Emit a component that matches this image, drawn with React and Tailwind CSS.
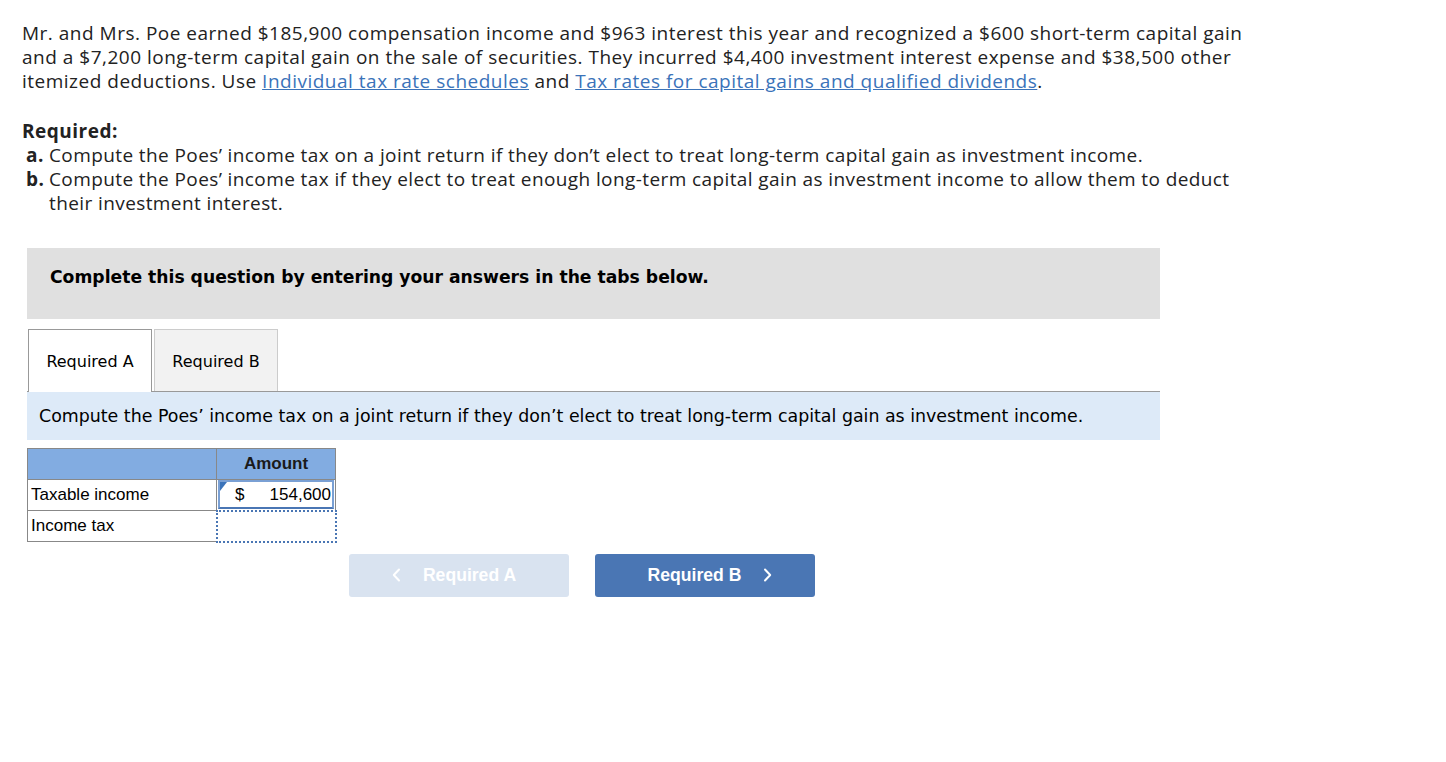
function Chevron({ dir }) {
  return (
    <svg width="9" height="14" viewBox="0 0 9 14" fill="none" stroke="currentColor" strokeWidth="2" strokeLinecap="round" strokeLinejoin="round">
      {dir === 'left' ? <path d="M7 1.5 1.8 7 7 12.5" /> : <path d="M2 1.5 7.2 7 2 12.5" />}
    </svg>
  );
}

export default function App() {
  return (
    <div className="min-h-screen bg-white text-[#222]">
      <div className="pl-[22px] pt-[21px] w-[1266px] font-['Open_Sans',sans-serif] text-[19px] leading-[24px] tracking-[0.5px]">
        <p>
          Mr. and Mrs. Poe earned $185,900 compensation income and $963 interest this year and recognized a $600 short-term capital gain and a $7,200 long-term capital gain on the sale of securities. They incurred $4,400 investment interest expense and $38,500 other itemized deductions. Use{' '}
          <a href="#" className="text-[#3b73b9] underline">Individual tax rate schedules</a> and{' '}
          <a href="#" className="text-[#3b73b9] underline">Tax rates for capital gains and qualified dividends</a>.
        </p>

        <div className="mt-[26px]">
          <p className="font-bold">Required:</p>
          <div className="flex pl-[4px]">
            <span className="font-bold w-[23px] shrink-0">a.</span>
            <span className="tracking-[0.4px]">Compute the Poes’ income tax on a joint return if they don’t elect to treat long-term capital gain as investment income.</span>
          </div>
          <div className="flex pl-[4px]">
            <span className="font-bold w-[23px] shrink-0">b.</span>
            <span className="tracking-[0.4px]">Compute the Poes’ income tax if they elect to treat enough long-term capital gain as investment income to allow them to deduct their investment interest.</span>
          </div>
        </div>
      </div>

      <div className="ml-[27px] w-[1133px] font-['DejaVu_Sans',sans-serif]">
        <div className="mt-[33px] h-[71px] bg-[#e0e0e0] flex items-start pt-[17px] pl-[23px] text-[17.2px] font-bold text-black">
          Complete this question by entering your answers in the tabs below.
        </div>

        <div className="mt-[10px] flex items-end border-b border-[#999]">
          <div className="ml-[1px] w-[124px] h-[63px] -mb-px bg-white border border-b-0 border-[#999] flex items-center justify-center pt-[2px] text-[16px] text-black">
            Required A
          </div>
          <div className="ml-[2px] w-[124px] h-[62px] bg-[#f2f2f2] border border-b-0 border-[#ccc] flex items-center justify-center pt-[2px] text-[16px] text-black">
            Required B
          </div>
        </div>

        <div className="h-[48px] bg-[#ddeaf8] flex items-center pl-[12px] text-[17.4px] text-black">
          Compute the Poes’ income tax on a joint return if they don’t elect to treat long-term capital gain as investment income.
        </div>

        <table className="mt-[8px] border-collapse font-['Liberation_Sans',sans-serif] text-[17px] text-black">
          <thead>
            <tr className="h-[31px] bg-[#82ace1]">
              <th className="w-[189px] border border-[#888]"></th>
              <th className="w-[119px] border border-[#888] font-bold text-[#1a1a1a]">Amount</th>
            </tr>
          </thead>
          <tbody>
            <tr className="h-[31px]">
              <td className="border border-[#888] pl-[3px]">Taxable income</td>
              <td className="border border-[#888] p-0">
                <div className="relative h-[29px] mx-[1px] border-2 border-[#7aa0d4] border-b-[#4a76b4] border-b-dotted flex items-center justify-between pl-[15px] pr-[1px]">
                  <span className="absolute left-0 top-0 w-0 h-0 border-t-[9px] border-t-[#3b73b9] border-r-[7px] border-r-transparent"></span>
                  <span>$</span>
                  <span>154,600</span>
                </div>
              </td>
            </tr>
            <tr className="h-[31px]">
              <td className="border border-[#888] pl-[3px]">Income tax</td>
              <td className="p-0 border-2 border-dotted border-[#4a76b4]"></td>
            </tr>
          </tbody>
        </table>

        <div className="mt-[11px] ml-[322px] flex gap-[26px] font-['Liberation_Sans',sans-serif] text-[17.6px] font-bold text-white">
          <button className="w-[220px] h-[43px] rounded-[3px] bg-[#d9e3f0] flex items-center justify-center gap-[22px] pr-[10px]">
            <Chevron dir="left" />
            <span>Required A</span>
          </button>
          <button className="w-[220px] h-[43px] rounded-[3px] bg-[#4a76b4] flex items-center justify-center gap-[22px] pl-[10px]">
            <span>Required B</span>
            <Chevron dir="right" />
          </button>
        </div>
      </div>
    </div>
  );
}
